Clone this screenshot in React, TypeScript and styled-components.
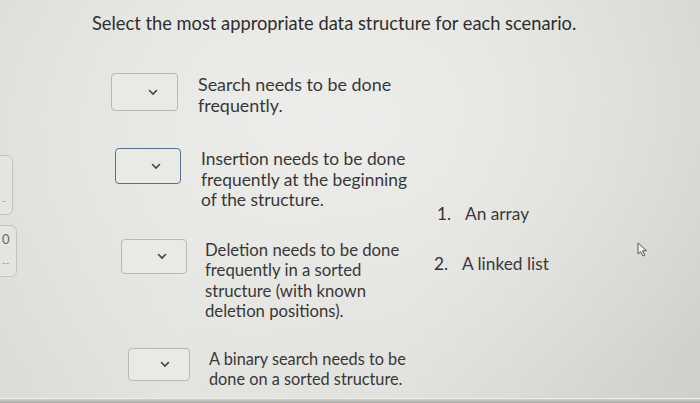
import React from "react";
import styled, { createGlobalStyle } from "styled-components";

const GlobalStyle = createGlobalStyle`
  html, body {
    margin: 0;
    padding: 0;
    height: 100%;
  }
  body {
    font-family: Lato, "Open Sans", sans-serif;
    color: #3a3a3a;
    overflow: hidden;
  }
`;

type Scenario = {
  lines: string[];
  indent: number;
  gap: number;
  space: number;
  size: number;
  w: number;
  h: number;
  focused?: boolean;
};

const scenarios: Scenario[] = [
  { lines: ["Search needs to be done", "frequently."], indent: 99, gap: 0, space: 20, size: 17.9, w: 67, h: 38 },
  {
    lines: ["Insertion needs to be done", "frequently at the beginning", "of the structure."],
    indent: 103,
    gap: 33,
    space: 20,
    size: 17.4,
    w: 66,
    h: 36,
    focused: true,
  },
  {
    lines: [
      "Deletion needs to be done",
      "frequently in a sorted",
      "structure (with known",
      "deletion positions).",
    ],
    indent: 109,
    gap: 28,
    space: 18,
    size: 16.7,
    w: 66,
    h: 35,
  },
  {
    lines: ["A binary search needs to be", "done on a sorted structure."],
    indent: 116,
    gap: 26,
    space: 19,
    size: 16.3,
    w: 62,
    h: 33,
  },
];

const answers = ["An array", "A linked list"];

const App: React.FC = () => (
  <>
    <GlobalStyle />
    <Page>
      <Title>Select the most appropriate data structure for each scenario.</Title>
      <Body>
        <Rail>
          <StubCard $height={60} $top={0} $width={13}>
            <StubDash>-</StubDash>
          </StubCard>
          <StubCard $height={52} $top={10} $width={17}>
            <StubNum>0</StubNum>
            <StubDash>--</StubDash>
          </StubCard>
        </Rail>
        <QuestionList>
          {scenarios.map((s, i) => (
            <Row key={i} $indent={s.indent} $gap={s.gap} $space={s.space}>
              <Select $focused={s.focused} $w={s.w} $h={s.h}>
                <Chevron width="10" height="7" viewBox="0 0 10 7">
                  <path d="M1.5 1.5 L5 5 L8.5 1.5" fill="none" stroke="#444" strokeWidth="1.6" strokeLinecap="round" />
                </Chevron>
              </Select>
              <Prompt $size={s.size}>
                {s.lines.map((l, j) => (
                  <span key={j}>{l}</span>
                ))}
              </Prompt>
            </Row>
          ))}
        </QuestionList>
        <AnswerList>
          {answers.map((a, i) => (
            <Answer key={a} $shift={i * -3}>
              <Num>{i + 1}.</Num>
              <span>{a}</span>
            </Answer>
          ))}
        </AnswerList>
      </Body>
      <Cursor width="14" height="16" viewBox="0 0 14 16">
        <path d="M2 1 L2 12 L4.8 9.6 L7 14 L8.8 13.2 L6.6 8.8 L10.5 8.6 Z" fill="#f4f4f2" stroke="#555" strokeWidth="1" strokeLinejoin="round" />
      </Cursor>
      <BottomEdge />
    </Page>
  </>
);

const Page = styled.div`
  position: relative;
  width: 700px;
  height: 403px;
  overflow: hidden;
  background:
    radial-gradient(ellipse 520px 320px at 330px 120px, rgba(238, 238, 236, 0.9), rgba(238, 238, 236, 0) 100%),
    linear-gradient(100deg, #d9d9d5 0%, #e2e2de 30%, #e0e0dc 60%, #cfcfcb 100%);
  display: flex;
  flex-direction: column;
`;

const Title = styled.h1`
  margin: 11px 0 0 92px;
  font-size: 18.3px;
  font-weight: 400;
  line-height: 24px;
  color: #2e2e2e;
  white-space: nowrap;
`;

const Body = styled.div`
  display: flex;
  margin-top: 38px;
`;

const Rail = styled.div`
  width: 12px;
  display: flex;
  flex-direction: column;
  padding-top: 82px;
`;

const StubCard = styled.div<{ $height: number; $top: number; $width: number }>`
  margin-top: ${(p) => p.$top}px;
  margin-left: -40px;
  width: ${(p) => p.$width + 40}px;
  height: ${(p) => p.$height}px;
  box-sizing: border-box;
  border: 1px solid #c4c4c0;
  border-radius: 6px;
  background: #e4e4e0;
  display: flex;
  flex-direction: column;
  align-items: flex-start;
  justify-content: flex-end;
  padding: 4px 0 10px 41px;
`;

const StubNum = styled.span`
  font-size: 13px;
  line-height: 14px;
  color: #666;
  margin-bottom: 12px;
`;

const StubDash = styled.span`
  font-size: 10px;
  line-height: 8px;
  color: #999;
`;

const QuestionList = styled.div`
  display: flex;
  flex-direction: column;
  width: 410px;
`;

const Row = styled.div<{ $indent: number; $gap: number; $space: number }>`
  display: flex;
  align-items: flex-start;
  gap: ${(p) => p.$space}px;
  margin-left: ${(p) => p.$indent}px;
  margin-top: ${(p) => p.$gap}px;
`;

const Select = styled.div<{ $focused?: boolean; $w: number; $h: number }>`
  flex: none;
  width: ${(p) => p.$w}px;
  height: ${(p) => p.$h}px;
  box-sizing: border-box;
  border: ${(p) => (p.$focused ? "1.5px solid #57708c" : "1px solid #b8b8b5")};
  border-radius: 4px;
  background: #e9e9e6;
  display: flex;
  align-items: center;
  justify-content: flex-end;
  padding-right: 19px;
`;

const Chevron = styled.svg`
  display: block;
`;

const Prompt = styled.div<{ $size: number }>`
  display: flex;
  flex-direction: column;
  font-size: ${(p) => p.$size}px;
  line-height: 20.5px;
  color: #383838;
  margin-top: 1px;
  white-space: nowrap;
`;

const AnswerList = styled.ol`
  list-style: none;
  margin: 130px 0 0 15px;
  padding: 0;
  display: flex;
  flex-direction: column;
  gap: 28px;
`;

const Answer = styled.li<{ $shift: number }>`
  display: flex;
  font-size: 17.3px;
  line-height: 22px;
  color: #3a3a3a;
  margin-left: ${(p) => p.$shift}px;
`;

const Num = styled.span`
  width: 28px;
  color: #333;
`;

const Cursor = styled.svg`
  position: absolute;
  left: 636px;
  top: 242px;
`;

const BottomEdge = styled.div`
  position: absolute;
  left: 0;
  right: 0;
  bottom: 0;
  height: 4px;
  background: linear-gradient(#d2d2ce, #a9a9a5);
  border-top: 1px solid #ececea;
`;

export default App;
